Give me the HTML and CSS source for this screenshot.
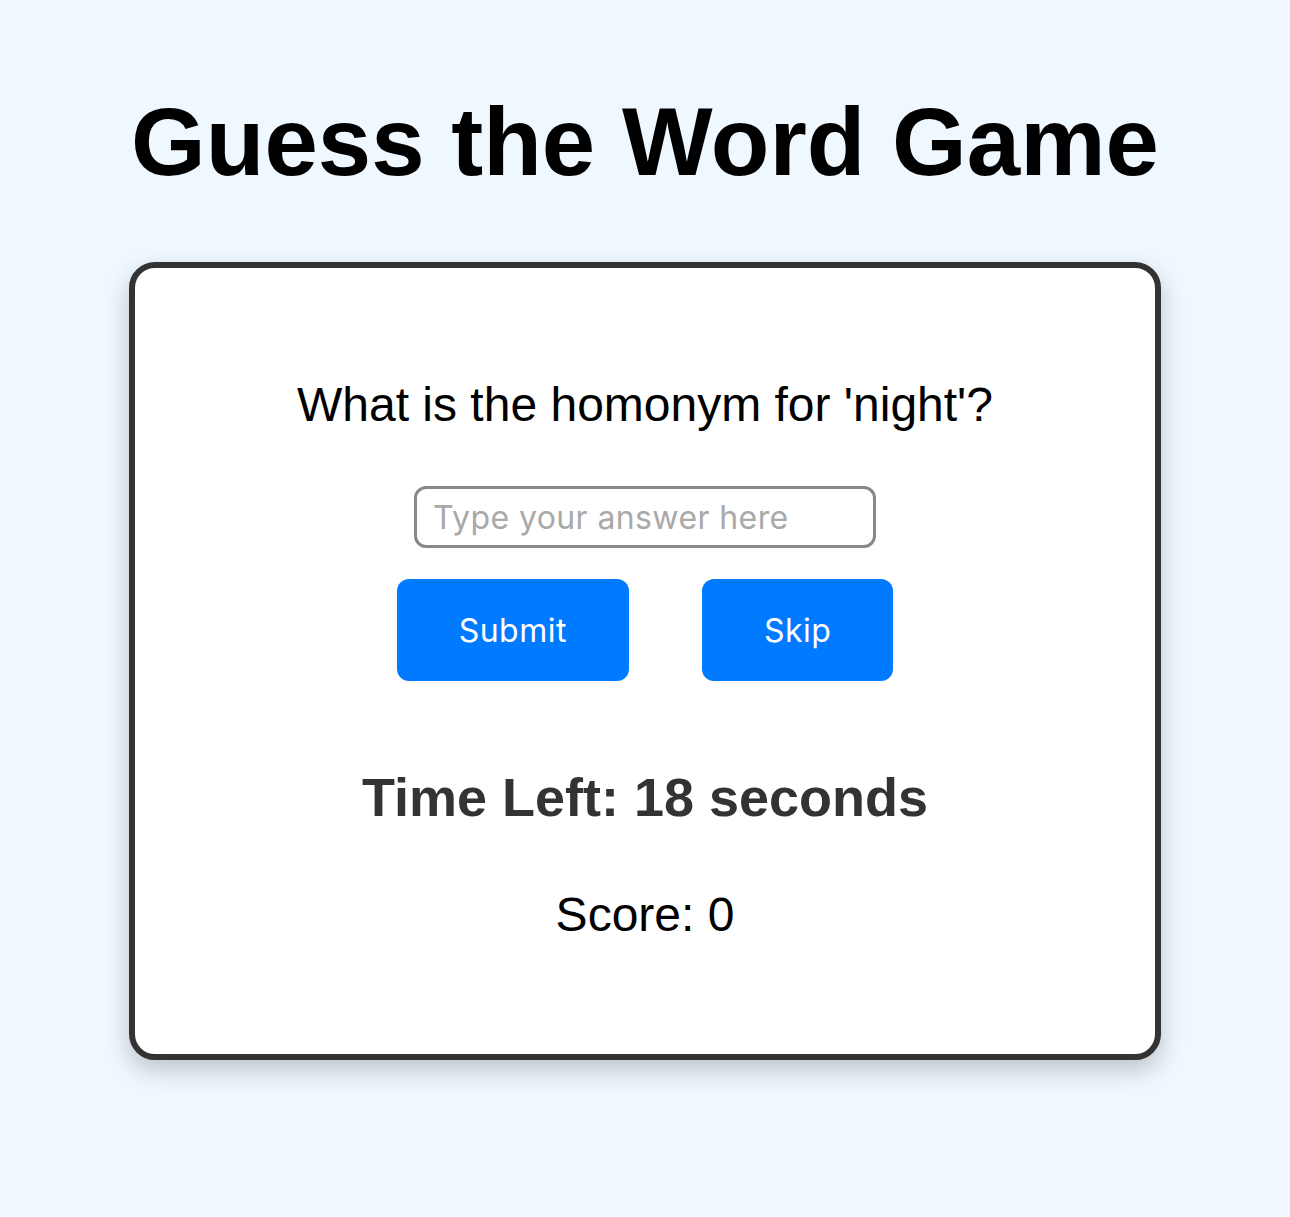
FILE: index.html
```html
<!DOCTYPE html>
<html lang="en">
<head>
    <meta charset="UTF-8">
    <meta name="viewport" content="width=device-width, initial-scale=1.0">
    <link rel="stylesheet" href="styles.css">
    <title>Guess the Word Game</title>
</head>
<body>

    <h1 class="titulo">Guess the Word Game</h1>

    <!-- Tarjeta del juego -->
    <div class="juego">
        <p class="pregunta" id="pregunta">What is the homonym for 'night'?</p>
        <input type="text" class="respuesta" id="respuesta" placeholder="Type your answer here">
        <div class="botones">
            <button type="button" class="boton" onclick="enviar()">Submit</button>
            <button type="button" class="boton" onclick="saltar()">Skip</button>
        </div>
        <p class="tiempo">Time Left: <span id="segundos">18</span> seconds</p>
        <p class="puntaje">Score: <span id="puntos">0</span></p>
    </div>

    <script>
        // Función para revisar la respuesta
        function enviar() {
            const input = document.getElementById('respuesta');
            if (input.value.trim().toLowerCase() === 'knight') {
                const puntos = document.getElementById('puntos');
                puntos.textContent = parseInt(puntos.textContent) + 1;
            }
            input.value = '';
        }

        // Función para saltar la pregunta
        function saltar() {
            document.getElementById('respuesta').value = '';
        }
    </script>
</body>
</html>
```

FILE: styles.css
```css
body {
    margin: 0;
    background-color: #f0f8ff;
    font-family: "Liberation Sans", Arial, sans-serif;
}

.titulo {
    margin: 87px 0 65px;
    font-size: 96px;
    font-weight: bold;
    text-align: center;
    color: #000;
}

.juego {
    box-sizing: border-box;
    width: 1032px;
    margin: 0 auto 60px;
    padding: 109px 40px 112px;
    background-color: #fff;
    border: 6px solid #333;
    border-radius: 26px;
    box-shadow: 0 10px 24px rgba(0, 0, 0, 0.22);
    display: flex;
    flex-direction: column;
    align-items: center;
}

.pregunta {
    margin: 0 0 54px;
    font-size: 48px;
    color: #000;
}

.respuesta {
    box-sizing: border-box;
    width: 462px;
    height: 62px;
    padding: 0 16px;
    border: 3px solid #888;
    border-radius: 12px;
    font-family: Inter, "Noto Sans", sans-serif;
    font-size: 32px;
    letter-spacing: 0.4px;
    color: #000;
    outline: none;
}

.respuesta::placeholder {
    color: #a9a9a9;
}

.botones {
    display: flex;
    gap: 73px;
    margin-top: 31px;
}

.boton {
    height: 102px;
    padding: 0 62px;
    background-color: #007bff;
    color: white;
    border: none;
    border-radius: 12px;
    font-family: Inter, "Noto Sans", sans-serif;
    font-size: 32px;
    letter-spacing: 0.5px;
    cursor: pointer;
}

.tiempo {
    margin: 85px 0 59px;
    font-size: 54px;
    font-weight: bold;
    color: #333;
}

.puntaje {
    margin: 0;
    font-size: 48px;
    color: #000;
}
```
